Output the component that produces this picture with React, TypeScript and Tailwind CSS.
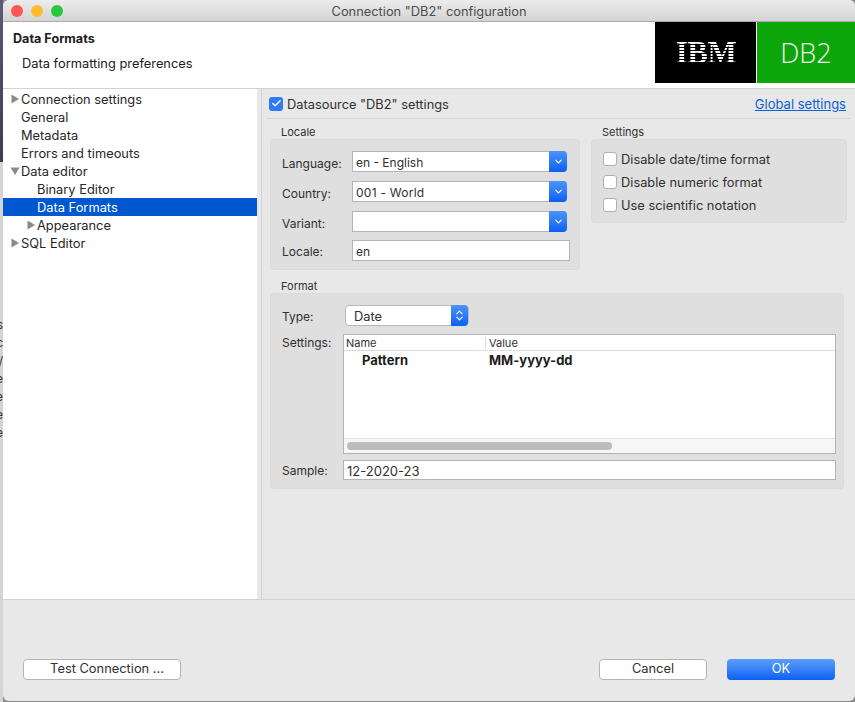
import { Check, ChevronDown, ChevronsUpDown } from "lucide-react";

function Arrow({ dir }: { dir: "right" | "down" }) {
  return (
    <svg width="10" height="10" viewBox="0 0 10 10" className="shrink-0">
      {dir === "right" ? (
        <path d="M1.5 0.5 L9 5 L1.5 9.5 Z" fill="#8a8a8a" />
      ) : (
        <path d="M0.5 1.5 L9.5 1.5 L5 9 Z" fill="#8a8a8a" />
      )}
    </svg>
  );
}

function TreeRow({
  label,
  indent,
  arrow,
  selected,
}: {
  label: string;
  indent: number;
  arrow?: "right" | "down";
  selected?: boolean;
}) {
  return (
    <div
      className={`flex h-[18px] items-center ${selected ? "bg-[#0058d0] text-white" : "text-[#262626]"}`}
    >
      <div className={indent === 1 ? "w-[34px] flex justify-end pr-[1px]" : "w-[18px] flex justify-end pr-[1px]"}>
        {arrow && <Arrow dir={arrow} />}
      </div>
      <span className="pt-[2px]">{label}</span>
    </div>
  );
}

function Combo({ label, value, wide }: { label: string; value: string; wide?: boolean }) {
  return (
    <div className="flex h-[21px] items-center text-[12px]">
      <span className="w-[70px] pt-[4px] text-[#303030]">{label}</span>
      <div className="flex h-[21px] w-[215px] items-center rounded-r-[4px] border border-r-0 border-[#b4b4b4] bg-white pl-[3px] text-[#303030]">
        <span className={`flex-1 pt-[3px] ${wide ? "tracking-[0.25px]" : ""}`}>{value}</span>
        <div className="-my-px flex h-[21px] w-[18px] items-center justify-center rounded-r-[4px] bg-gradient-to-b from-[#4a94fb] to-[#0a5ff0]">
          <ChevronDown size={11} strokeWidth={2.5} color="#ffffff" />
        </div>
      </div>
    </div>
  );
}

function CheckRow({ label }: { label: string }) {
  return (
    <div className="flex h-[14px] items-center gap-[4px]">
      <div className="h-[14px] w-[14px] rounded-[3px] border border-[#b0b0b0] bg-white" />
      <span className="pt-[2px] text-[#303030]">{label}</span>
    </div>
  );
}

function Button({ label, cls, primary }: { label: string; cls: string; primary?: boolean }) {
  return (
    <button
      type="button"
      className={`h-[21px] pb-[2px] ${cls} rounded-[4px] ${
        primary
          ? "bg-gradient-to-b from-[#5a9dfb] to-[#0a5ff5] text-white"
          : "border border-[#b4b4b4] bg-white text-[#303030]"
      }`}
    >
      {label}
    </button>
  );
}

export default function App() {
  return (
    <div className="flex h-[702px] w-[855px] overflow-hidden bg-[#8c8c8c] text-[12.85px] leading-[16px] [font-family:Inter,'Liberation_Sans',sans-serif]">
      {/* desktop behind the dialog */}
      <div className="flex w-[3px] shrink-0 flex-col">
        <div className="h-[162px] bg-gradient-to-b from-[#5c5a78] to-[#3f3a50]" />
        <div className="flex-1 overflow-hidden bg-[#d4d4d4] pt-[154px] text-[12px] leading-[18px] text-[#333333]">
          {["s", "c", "/", "e", "e", "e", "e"].map((c, i) => (
            <div key={i} className="flex justify-end">
              {c}
            </div>
          ))}
        </div>
      </div>

      <div className="flex h-[701px] flex-1 flex-col overflow-hidden rounded-[6px] bg-[#e8e8e8]">
        {/* title bar */}
        <div className="relative flex h-[22px] shrink-0 items-center justify-center border-b border-[#ababab] bg-gradient-to-b from-[#ececec] to-[#d3d3d3] pt-[2px]">
          <div className="absolute left-[8px] top-[5px] flex gap-[8px]">
            <div className="h-[12px] w-[12px] rounded-full bg-[#fc5753]" />
            <div className="h-[12px] w-[12px] rounded-full bg-[#fdbc2e]" />
            <div className="h-[12px] w-[12px] rounded-full bg-[#27c83f]" />
          </div>
          <span className="text-[#4c4c4c]">Connection "DB2" configuration</span>
        </div>

        {/* banner */}
        <div className="flex h-[67px] shrink-0 border-b border-[#d2d2d2] bg-white">
          <div className="flex-1 pl-[10px] pt-[9px] text-[#202020]">
            <div className="text-[12.6px] font-bold">Data Formats</div>
            <div className="mt-[9px] pl-[9px]">Data formatting preferences</div>
          </div>
          <div className="flex h-[61px]">
            <div className="flex w-[101px] items-center justify-center bg-black">
              <span className="bg-[repeating-linear-gradient(180deg,#ffffff_0px,#ffffff_2px,#000000_2px,#000000_3px)] bg-clip-text pl-[1px] text-[31px] leading-[27px] font-bold tracking-[-0.5px] text-transparent [font-family:'Liberation_Serif',serif]">
                IBM
              </span>
            </div>
            <div className="ml-[1px] flex w-[98px] items-center justify-center bg-[#0ca60a] text-[27px] font-light text-[#f2f2f2] [font-family:'Open_Sans',sans-serif]">
              DB2
            </div>
          </div>
        </div>

        {/* main split */}
        <div className="flex h-[511px] shrink-0 border-b border-[#d2d2d2]">
          <div className="w-[254px] shrink-0 bg-white pt-[1px]">
            <TreeRow label="Connection settings" indent={0} arrow="right" />
            <TreeRow label="General" indent={0} />
            <TreeRow label="Metadata" indent={0} />
            <TreeRow label="Errors and timeouts" indent={0} />
            <TreeRow label="Data editor" indent={0} arrow="down" />
            <TreeRow label="Binary Editor" indent={1} />
            <TreeRow label="Data Formats" indent={1} selected />
            <TreeRow label="Appearance" indent={1} arrow="right" />
            <TreeRow label="SQL Editor" indent={0} arrow="right" />
          </div>

          <div className="w-[4px] shrink-0" />

          <div className="flex-1 border-l border-[#d2d2d2] pl-[5px]">
            {/* settings header */}
            <div className="mr-[5px] flex h-[30px] items-center justify-between border-b border-[#d4d4d4] pl-[2px] pr-[4px]">
              <div className="flex items-center gap-[4px] text-[#303030]">
                <div className="flex h-[14px] w-[14px] items-center justify-center rounded-[3px] bg-[#2f7bf6]">
                  <Check size={11} strokeWidth={3} color="#ffffff" />
                </div>
                <span className="pt-[2px]">Datasource "DB2" settings</span>
              </div>
              <span className="text-[13px] text-[#0b62d6] underline">Global settings</span>
            </div>

            <div className="flex pl-[3px] pt-[5px]">
              {/* locale group */}
              <div className="w-[310px]">
                <div className="pl-[11px] pt-[1px] text-[11px] leading-[14px] text-[#303030]">Locale</div>
                <div className="flex h-[131px] flex-col gap-[9px] rounded-[4px] border border-[#dadada] bg-[#dfdfdf] pl-[11px] pt-[11px]">
                  <Combo label="Language:" value="en - English" />
                  <Combo label="Country:" value="001 - World" wide />
                  <Combo label="Variant:" value="" />
                  <div className="-mt-[1px] flex h-[21px] items-center text-[12px]">
                    <span className="w-[70px] pt-[3px] text-[#303030]">Locale:</span>
                    <div className="flex h-[21px] w-[218px] items-center border border-[#b4b4b4] bg-white pl-[3px] pt-[3px] text-[#303030]">
                      en
                    </div>
                  </div>
                </div>
              </div>

              {/* settings group */}
              <div className="ml-[11px] w-[256px]">
                <div className="pl-[11px] pt-[1px] text-[11px] leading-[14px] text-[#303030]">Settings</div>
                <div className="flex h-[84px] flex-col gap-[9px] rounded-[4px] border border-[#dadada] bg-[#dfdfdf] pl-[11px] pt-[12px]">
                  <CheckRow label="Disable date/time format" />
                  <CheckRow label="Disable numeric format" />
                  <CheckRow label="Use scientific notation" />
                </div>
              </div>
            </div>

            {/* format group */}
            <div className="w-[577px] pl-[3px] pt-[8px]">
              <div className="pl-[11px] pt-[1px] text-[11px] leading-[14px] text-[#303030]">Format</div>
              <div className="h-[196px] rounded-[4px] border border-[#dadada] bg-[#dfdfdf] pt-[11px]">
                <div className="flex h-[21px] items-center pl-[11px]">
                  <span className="w-[63px] pt-[3px] text-[12px] text-[#303030]">Type:</span>
                  <div className="flex h-[21px] w-[124px] items-center rounded-[4px] border border-[#b8b8b8] bg-white pl-[8px] text-[#303030]">
                    <span className="flex-1 pt-[2px]">Date</span>
                    <div className="-my-px flex h-[21px] w-[17px] items-center justify-center rounded-r-[4px] bg-gradient-to-b from-[#4a94fb] to-[#0a5ff0]">
                      <ChevronsUpDown size={13} strokeWidth={2} color="#ffffff" />
                    </div>
                  </div>
                </div>

                <div className="mt-[8px] flex pl-[11px]">
                  <span className="w-[61px] pt-[1px] text-[12px] text-[#303030]">Settings:</span>
                  <div className="flex h-[120px] w-[493px] flex-col border border-[#b4b4b4] bg-white">
                    <div className="flex h-[16px] shrink-0 items-center border-b border-[#dcdcdc] text-[11px] text-[#303030]">
                      <span className="w-[142px] border-r border-[#d8d8d8] pl-[2px] leading-[12px]">Name</span>
                      <span className="pl-[3px]">Value</span>
                    </div>
                    <div className="flex h-[18px] items-center text-[13px] font-bold text-[#1c1c1c]">
                      <span className="w-[145px] pl-[18px]">Pattern</span>
                      <span>MM-yyyy-dd</span>
                    </div>
                    <div className="flex-1" />
                    <div className="flex h-[15px] shrink-0 items-center border-t border-[#e2e2e2] bg-[#f6f6f6] pl-[3px]">
                      <div className="h-[8px] w-[265px] rounded-full bg-[#bcbcbc]" />
                    </div>
                  </div>
                </div>

                <div className="mt-[6px] flex h-[20px] items-center pl-[11px]">
                  <span className="w-[61px] pt-[2px] text-[12px] text-[#303030]">Sample:</span>
                  <div className="flex h-[20px] w-[493px] items-center border border-[#b4b4b4] bg-white pl-[3px] pt-[2px] text-[13px] text-[#303030]">
                    12-2020-23
                  </div>
                </div>
              </div>
            </div>
          </div>
        </div>

        {/* footer */}
        <div className="flex flex-1 items-start justify-between pl-[20px] pr-[20px] pt-[59px]">
          <Button label="Test Connection ..." cls="w-[158px] pl-[10px]" />
          <div className="flex gap-[20px]">
            <Button label="Cancel" cls="w-[108px]" />
            <Button label="OK" cls="w-[108px]" primary />
          </div>
        </div>
      </div>
    </div>
  );
}
